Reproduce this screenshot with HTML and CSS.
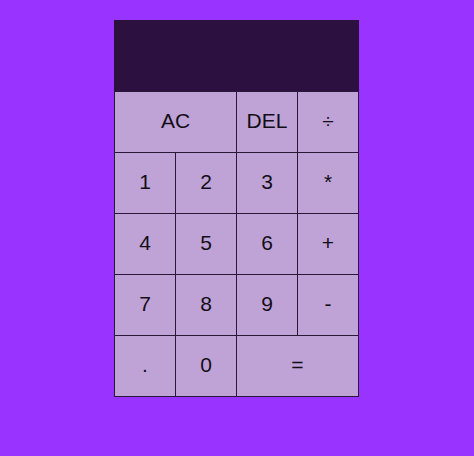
FILE: index.html
```html
<!DOCTYPE html>
<html>
<head>
<meta charset="utf-8">
<link rel="stylesheet" href="styles.css">
</head>
<body>
<div class="calc">
  <div class="display"></div>
  <button class="key span2">AC</button>
  <button class="key">DEL</button>
  <button class="key">÷</button>
  <button class="key">1</button>
  <button class="key">2</button>
  <button class="key">3</button>
  <button class="key">*</button>
  <button class="key">4</button>
  <button class="key">5</button>
  <button class="key">6</button>
  <button class="key">+</button>
  <button class="key">7</button>
  <button class="key">8</button>
  <button class="key">9</button>
  <button class="key">-</button>
  <button class="key">.</button>
  <button class="key">0</button>
  <button class="key span2">=</button>
</div>
</body>
</html>
```
FILE: styles.css
```css
html {
  margin: 0;
  padding: 0;
  background: #9933ff;
}
body {
  margin: 0;
  background: #9933ff;
  width: 473px;
  height: 456px;
  display: flex;
  justify-content: center;
  align-items: flex-start;
  padding: 20px 0 0 0;
  box-sizing: border-box;
  font-family: "Liberation Sans", Arial, sans-serif;
}
.calc {
  display: grid;
  grid-template-columns: repeat(4, 60px);
  grid-template-rows: 70px repeat(5, 60px);
  gap: 1px;
  padding: 1px;
  background: #2a1838;
}
.display {
  grid-column: 1 / -1;
  background: #2b1040;
  margin: -1px -1px 0 -1px;
}
.key {
  border: none;
  margin: 0;
  padding: 0 0 2px 0;
  background: #bfa3d6;
  color: #120e16;
  font-family: "Liberation Sans", Arial, sans-serif;
  font-size: 21px;
}
.span2 {
  grid-column: span 2;
}
```
